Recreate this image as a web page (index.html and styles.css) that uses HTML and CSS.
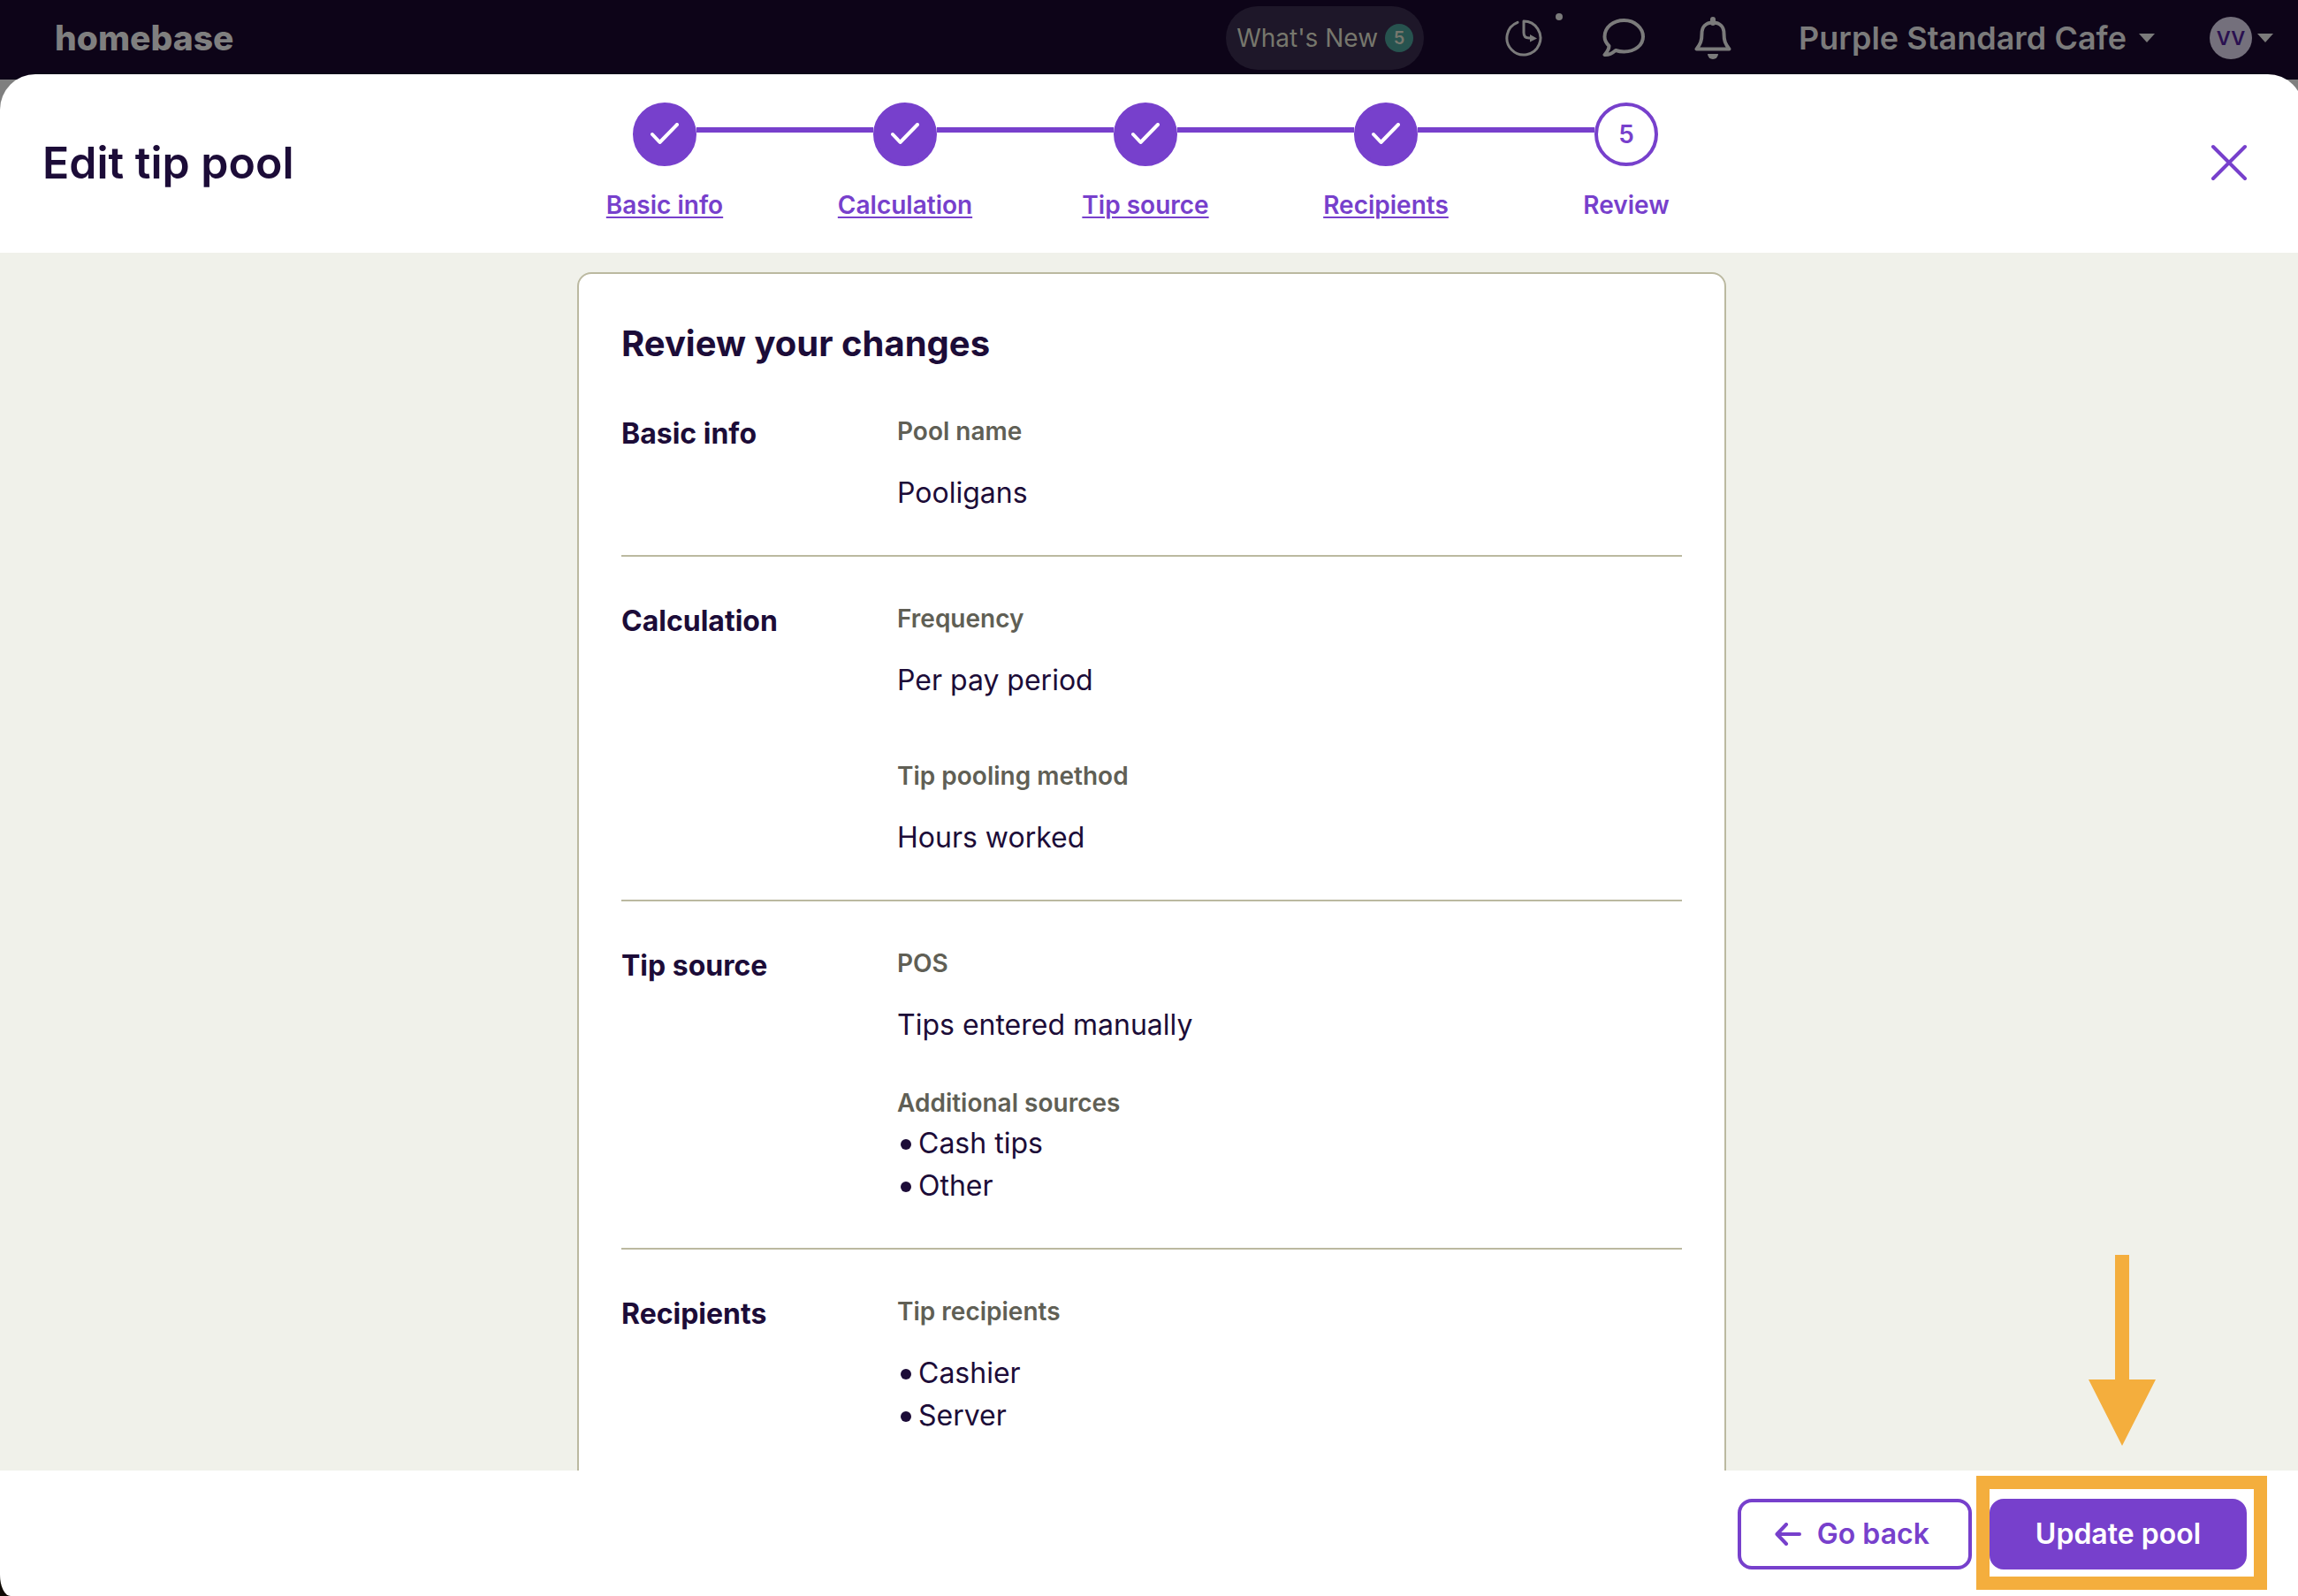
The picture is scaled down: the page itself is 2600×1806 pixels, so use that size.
FILE: index.html
```
<!DOCTYPE html>
<html lang="en">
<head>
    <meta charset="UTF-8">
    <meta name="viewport" content="width=device-width, initial-scale=1.0">
    <title>Edit tip pool</title>
    <link rel="stylesheet" href="styles.css">
</head>
<body>
    <header class="topbar">
        <a class="logo" href="#">homebase</a>
        <nav class="topbar-nav">
            <button class="whats-new" type="button">What's New <span class="badge">5</span></button>
            <button class="icon-button clock" type="button" aria-label="Time clock">
                <svg width="66" height="52" viewBox="0 0 66 52" fill="none" stroke="currentColor" stroke-width="3" stroke-linecap="round" stroke-linejoin="round">
                    <path d="M14 10.300A19 19 0 1 0 21 9v13q0 6 6 6h4"/>
                    <path d="M28 24l8 4.500-8 4z" fill="currentColor" stroke="none"/>
                    <circle cx="61" cy="4" r="4" fill="currentColor" stroke="none"/>
                </svg>
            </button>
            <button class="icon-button chat" type="button" aria-label="Messages">
                <svg width="48" height="44" viewBox="0 0 48 44" fill="none" stroke="currentColor" stroke-width="4" stroke-linejoin="round">
                    <path d="M24.500 2C12 2 2.500 10 2.500 20.500c0 4 2 7.500 5 10.500 0 3-2 6.500-5 10 5 .5 9-2 12.500-5 3 1 6 1.500 9.500 1.500C37 37.500 46 30 46 20.500S37 2 24.500 2z"/>
                </svg>
            </button>
            <button class="icon-button bell" type="button" aria-label="Notifications">
                <svg width="42" height="48" viewBox="0 0 42 48" fill="none" stroke="currentColor" stroke-width="4" stroke-linecap="round" stroke-linejoin="round">
                    <path d="M21 3v4" stroke-width="6"/>
                    <path d="M21 6.500C12.500 6.500 8.500 12 8.500 19c0 8-1.500 12-6 17.500h37c-4.500-5.500-6-9.500-6-17.500C33.500 12 29.500 6.500 21 6.500z"/>
                    <path d="M15 42h12a6 6 0 0 1-12 0z" fill="currentColor" stroke="none"/>
                </svg>
            </button>
            <button class="company" type="button">Purple Standard Cafe <span class="caret"></span></button>
            <button class="account" type="button" aria-label="Account"><span class="avatar">VV</span><span class="caret"></span></button>
        </nav>
    </header>

    <div class="backdrop">
        <main class="modal" role="dialog" aria-labelledby="modalTitle">
            <div class="modal-header">
                <h1 id="modalTitle">Edit tip pool</h1>
                <ol class="stepper">
                    <li class="step done">
                        <div class="track"><span class="marker"><svg width="32" height="26" viewBox="0 0 32 26"><path d="M2 13l8.500 9L30 2"/></svg></span></div>
                        <a href="#">Basic info</a>
                    </li>
                    <li class="step done">
                        <div class="track"><span class="marker"><svg width="32" height="26" viewBox="0 0 32 26"><path d="M2 13l8.500 9L30 2"/></svg></span></div>
                        <a href="#">Calculation</a>
                    </li>
                    <li class="step done">
                        <div class="track"><span class="marker"><svg width="32" height="26" viewBox="0 0 32 26"><path d="M2 13l8.500 9L30 2"/></svg></span></div>
                        <a href="#">Tip source</a>
                    </li>
                    <li class="step done">
                        <div class="track"><span class="marker"><svg width="32" height="26" viewBox="0 0 32 26"><path d="M2 13l8.500 9L30 2"/></svg></span></div>
                        <a href="#">Recipients</a>
                    </li>
                    <li class="step" aria-current="step">
                        <div class="track"><span class="marker">5</span></div>
                        <span>Review</span>
                    </li>
                </ol>
                <button class="close" type="button" aria-label="Close">
                    <svg width="44" height="44" viewBox="0 0 44 44"><path d="M4 4l36 36M40 4L4 40"/></svg>
                </button>
            </div>

            <div class="modal-body">
                <div class="card">
                    <h2>Review your changes</h2>

                    <section class="review-row">
                        <h3>Basic info</h3>
                        <dl class="fields">
                            <div class="field">
                                <dt>Pool name</dt>
                                <dd>Pooligans</dd>
                            </div>
                        </dl>
                    </section>

                    <section class="review-row">
                        <h3>Calculation</h3>
                        <dl class="fields">
                            <div class="field">
                                <dt>Frequency</dt>
                                <dd>Per pay period</dd>
                            </div>
                            <div class="field">
                                <dt>Tip pooling method</dt>
                                <dd>Hours worked</dd>
                            </div>
                        </dl>
                    </section>

                    <section class="review-row">
                        <h3>Tip source</h3>
                        <dl class="fields tight">
                            <div class="field">
                                <dt>POS</dt>
                                <dd>Tips entered manually</dd>
                            </div>
                            <div class="field compact">
                                <dt>Additional sources</dt>
                                <dd>
                                    <ul>
                                        <li>Cash tips</li>
                                        <li>Other</li>
                                    </ul>
                                </dd>
                            </div>
                        </dl>
                    </section>

                    <section class="review-row">
                        <h3>Recipients</h3>
                        <dl class="fields">
                            <div class="field">
                                <dt>Tip recipients</dt>
                                <dd>
                                    <ul>
                                        <li>Cashier</li>
                                        <li>Server</li>
                                    </ul>
                                </dd>
                            </div>
                        </dl>
                    </section>
                </div>
            </div>

            <div class="modal-footer">
                <button class="button secondary" type="button">
                    <svg width="30" height="26" viewBox="0 0 30 26"><path d="M28 13H3M13 2L2.500 13 13 24"/></svg>
                    Go back
                </button>
                <div class="callout">
                    <button class="button primary" type="button">Update pool</button>
                    <svg class="callout-arrow" width="76" height="216" viewBox="0 0 76 216"><path d="M30 0h16v141h30L38 216 0 141h30z"/></svg>
                </div>
            </div>
        </main>
    </div>
</body>
</html>
```
FILE: styles.css
```
* {
    box-sizing: border-box;
}
body {
    margin: 0;
    height: 100vh;
    display: flex;
    flex-direction: column;
    overflow: hidden;
    font-family: Inter, "Liberation Sans", sans-serif;
    font-size: 32px;
    line-height: 48px;
    color: #1c0c38;
}
h1, h2, h3, dl, dd, ul, ol {
    margin: 0;
    padding: 0;
}
ul, ol {
    list-style: none;
}
button {
    margin: 0;
    padding: 0;
    border: none;
    background: none;
    font: inherit;
    color: inherit;
    cursor: pointer;
}
svg {
    display: block;
}

/* Top bar */
.topbar {
    flex: none;
    display: flex;
    justify-content: space-between;
    height: 90px;
    padding: 6px 28px 10px 62px;
    background: #0d0418;
    color: #7b7b7b;
}
.logo {
    align-self: center;
    font-size: 39px;
    font-weight: 800;
    color: #7f7f7f;
    text-decoration: none;
}
.topbar-nav {
    display: flex;
    align-items: center;
}
.whats-new {
    display: flex;
    align-items: center;
    gap: 8px;
    height: 72px;
    padding: 0 12px;
    border-radius: 36px;
    background: #1e1729;
    font-size: 28px;
    color: #77776d;
}
.badge {
    width: 32px;
    height: 32px;
    border-radius: 50%;
    background: #27534f;
    font-size: 20px;
    font-weight: 600;
    line-height: 32px;
    text-align: center;
}
.clock {
    margin: 0 44px 4px 92px;
}
.bell {
    margin: 0 76px 0 56px;
}
.company {
    display: flex;
    align-items: center;
    gap: 14px;
    font-size: 36px;
    font-weight: 600;
}
.caret {
    border: 9px solid transparent;
    border-top: 10px solid currentColor;
    border-bottom: none;
}
.account {
    display: flex;
    align-items: center;
    gap: 6px;
    margin-left: 62px;
}
.avatar {
    width: 48px;
    height: 48px;
    border-radius: 50%;
    background: #74707c;
    font-size: 22px;
    font-weight: 600;
    text-align: center;
    color: #2a1050;
}

/* Modal */
.backdrop {
    flex: 1;
    min-height: 0;
    display: flex;
    background: linear-gradient(#7f7f7f 50%, #0f0a05 50%);
}
.modal {
    flex: 1;
    display: flex;
    flex-direction: column;
    margin: -6px -6px 0 0;
    border-radius: 40px 40px 0 0;
    border-bottom-left-radius: 12px 24px;
    background: #fff;
    overflow: hidden;
}
.modal-header {
    flex: none;
    display: grid;
    grid-template-columns: 1fr auto 1fr;
    align-items: center;
    padding: 32px 62px 34px 48px;
}
h1 {
    font-size: 50px;
    font-weight: 600;
    line-height: 60px;
}
.close {
    justify-self: end;
}
.close path {
    fill: none;
    stroke: #7740cc;
    stroke-width: 4;
    stroke-linecap: round;
}

.stepper {
    display: flex;
    font-size: 28px;
    font-weight: 600;
    line-height: 40px;
    color: #7740cc;
}
.step {
    display: flex;
    flex-direction: column;
    align-items: center;
    gap: 24px;
    width: 272px;
}
.step a {
    color: inherit;
    text-decoration-thickness: 2px;
    text-underline-offset: 3px;
}
.track {
    display: flex;
    align-items: center;
    width: 100%;
}
.track::before,
.track::after {
    content: "";
    flex: 1;
    height: 6px;
    margin-bottom: 10px;
    background: #7740cc;
}
.step:first-child .track::before,
.step:last-child .track::after {
    background: none;
}
.marker {
    display: flex;
    align-items: center;
    justify-content: center;
    width: 72px;
    height: 72px;
    border: 4px solid #7740cc;
    border-radius: 50%;
}
.done .marker {
    background: #7740cc;
}
.marker path {
    fill: none;
    stroke: #fff;
    stroke-width: 4;
    stroke-linecap: round;
    stroke-linejoin: round;
}

.modal-body {
    flex: 1;
    min-height: 0;
    padding: 22px 48px 0;
    background: #f0f1ea;
    overflow: hidden;
}
.card {
    max-width: 1300px;
    margin: 0 auto;
    padding: 48px;
    border: 2px solid #bbb9a0;
    border-radius: 16px;
    background: #fff;
}
h2 {
    margin-bottom: 46px;
    font-size: 40px;
    font-weight: 700;
    line-height: 62px;
}
.review-row {
    display: grid;
    grid-template-columns: 312px 1fr;
    padding: 48px 0 46px;
    border-bottom: 2px solid #bbb9a0;
}
h2 + .review-row {
    padding-top: 0;
}
.review-row:last-child {
    border-bottom: none;
}
h3 {
    font-size: 32px;
    font-weight: 700;
    line-height: 50px;
}
.fields {
    display: flex;
    flex-direction: column;
    gap: 62px;
}
.fields.tight {
    gap: 42px;
}
dt {
    margin-bottom: 24px;
    font-size: 28px;
    font-weight: 600;
    line-height: 44px;
    color: #605f55;
}
.compact dt {
    margin-bottom: 0;
}
.field li {
    display: flex;
    align-items: center;
    gap: 8px;
    padding-left: 4px;
}
.field li::before {
    content: "";
    width: 12px;
    height: 12px;
    margin-top: 2px;
    border-radius: 50%;
    background: #1c0c38;
}

.modal-footer {
    flex: none;
    display: flex;
    justify-content: flex-end;
    gap: 20px;
    padding: 32px 64px 30px;
}
.button {
    display: flex;
    align-items: center;
    gap: 18px;
    height: 80px;
    padding: 0 48px;
    border: 4px solid #7740cc;
    border-radius: 16px;
    font-weight: 600;
}
.secondary {
    padding: 0 44px 0 38px;
    color: #7740cc;
}
.secondary path {
    fill: none;
    stroke: #7740cc;
    stroke-width: 4;
    stroke-linecap: round;
    stroke-linejoin: round;
}
.primary {
    background: #7740cc;
    color: #fff;
}

/* Highlight around the main action */
.callout {
    position: relative;
}
.callout::before {
    content: "";
    position: absolute;
    inset: -26px -23px -23px -15px;
    border: 15px solid #f4ae3d;
    pointer-events: none;
}
.callout-arrow {
    position: absolute;
    right: 103px;
    bottom: 140px;
    fill: #f4ae3d;
}
```
